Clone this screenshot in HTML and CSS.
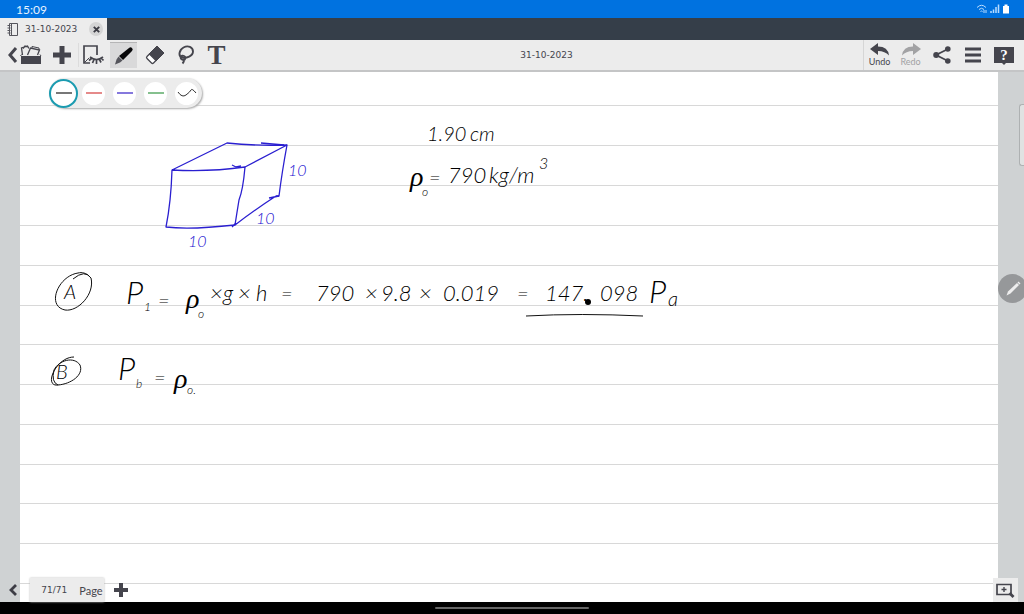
FILE: index.html
```
<!DOCTYPE html>
<html lang="en">

<head>
  <meta charset="UTF-8">
  <meta name="viewport" content="width=device-width, initial-scale=1.0">
  <title>31-10-2023</title>
  <link rel="stylesheet" href="styles.css">
</head>

<body>
  <div class="status-bar">
    <span>15:09</span>
    <svg class="status-icons" width="34" height="12" viewBox="0 0 34 12">
      <path d="M1 4.500Q5.500 0 10 4.500M3 6.500Q5.500 4 8 6.500M4.500 8.500Q5.500 7.500 6.500 8.500M8 10V7M10 7v3" fill="none" stroke="#b9dcff"/>
      <path d="M15 10V8M17.500 10V6.500M20 10V4M22.500 10V1.500" stroke="#b9dcff" stroke-width="1.500"/>
      <path d="M27 3h1.500V1.500h3V3H33v7.500h-6z" fill="#fff"/>
    </svg>
  </div>

  <div class="tabs">
    <div class="tab">
      <svg width="11" height="13" viewBox="0 0 11 13" fill="none" stroke="#55555c">
        <path d="M2.500.5h8v12h-8zM4.500 1v11M.5 2.500h3M.5 5h3M.5 7.500h3M.5 10h3"/>
      </svg>
      <span>31-10-2023</span>
      <button type="button" class="close" aria-label="Close tab">
        <svg width="7" height="7" viewBox="0 0 7 7"><path d="M.8.8l5.400 5.400M6.200.8L.8 6.200" stroke="#3c3c44" stroke-width="1.900"/></svg>
      </button>
    </div>
  </div>

  <header class="toolbar">
    <div class="tools">
      <button type="button" class="back" aria-label="Back to notes">
        <svg width="36" height="22" viewBox="0 0 36 22">
          <path d="M9 4L3 11l6 7" fill="none" stroke="#45454d" stroke-width="3"/>
          <path d="M14 12h20v8H14z" fill="#45454d"/>
          <path d="M15.500 11l-1-7 6-2 1.500 2.500M16 4.500l2-2.500 2.500 1M20.500 11l3-7 9 2-2 5" fill="none" stroke="#45454d" stroke-width="1.300"/>
          <path d="M13.500 12l1-1.500M33 10.500l1 1.500M25 4V2.500l7 1.500v2" fill="none" stroke="#45454d"/>
        </svg>
      </button>
      <button type="button" aria-label="New">
        <svg width="18" height="18" viewBox="0 0 18 18"><path d="M9 0v18M0 9h18" stroke="#45454d" stroke-width="5"/></svg>
      </button>
      <button type="button" class="divided" aria-label="View mode">
        <svg width="22" height="20" viewBox="0 0 22 20" fill="none" stroke="#45454d">
          <path d="M8 18H2V1h13v9" stroke-width="1.700"/>
          <path d="M2 18l5-5" stroke-width="1"/>
          <path d="M8 12q6.500 5 13 0M9.500 13.500L7 15.500M12 14.500l-1.500 3.500M14.500 15v4M17.500 14.500l1.500 3M19.500 13.500l2 2" stroke-width="1.700"/>
        </svg>
      </button>
      <button type="button" class="active" aria-label="Pen">
        <svg width="20" height="20" viewBox="0 0 20 20">
          <path d="M15 2q1.500-1.500 3 0t0 3L9 14l-4-4z" fill="#08080a"/>
          <path d="M4.500 10.500l4 4-2.500 2-5 2 1.500-5z" fill="#55555c"/>
        </svg>
      </button>
      <button type="button" aria-label="Eraser">
        <svg width="20" height="20" viewBox="0 0 20 20">
          <path d="M12 1l7 7-8 8-7-7z" fill="#45454d" stroke="#45454d" stroke-linejoin="round"/>
          <path d="M4.500 9l6.500 6.500-2.500 2.500q-1 1-2 0L2 13.500q-1-1 0-2z" fill="#fff" stroke="#45454d" stroke-width="1.300"/>
        </svg>
      </button>
      <button type="button" aria-label="Lasso">
        <svg width="18" height="20" viewBox="0 0 18 20" fill="none" stroke="#45454d" stroke-width="1.900">
          <path d="M5 12.500C1 11 2 5 6.500 2.500S16 2 16 6.500 9.500 13.500 5 12.500z"/>
          <path d="M4 12q1-2 3-1t1 3-3 .5-1-2.500M6 14q2 2-.5 4.500"/>
        </svg>
      </button>
      <button type="button" class="text-tool" aria-label="Text">T</button>
    </div>

    <h1>31-10-2023</h1>

    <div class="actions">
      <button type="button" class="labelled">
        <svg width="20" height="14" viewBox="0 0 20 14"><path d="M0 6l8-6v3.500q10 0 11 9-4-4.500-11-4.500v4z" fill="#45454d"/></svg>
        Undo
      </button>
      <button type="button" class="labelled" disabled>
        <svg width="20" height="14" viewBox="0 0 20 14"><path d="M20 6l-8-6v3.500q-10 0-11 9 4-4.500 11-4.500v4z" fill="#a2a2a4"/></svg>
        Redo
      </button>
      <button type="button" aria-label="Share">
        <svg width="18" height="18" viewBox="0 0 18 18" fill="#45454d">
          <path d="M15 3L3 9l12 6" fill="none" stroke="#45454d" stroke-width="1.800"/>
          <circle cx="3.200" cy="9" r="3"/><circle cx="14.800" cy="3" r="2.800"/><circle cx="14.800" cy="15" r="2.800"/>
        </svg>
      </button>
      <button type="button" aria-label="Menu">
        <svg width="16" height="16" viewBox="0 0 16 16"><path d="M0 2h16M0 8h16M0 14h16" stroke="#45454d" stroke-width="3"/></svg>
      </button>
      <button type="button" class="help" aria-label="Help">?</button>
    </div>
  </header>

  <main class="workspace">
    <div class="page">
      <svg class="ink" width="100%" height="100%">
        <g class="rules">
          <line x2="100%" y1="33" y2="33"/>
          <line x2="100%" y1="73" y2="73"/>
          <line x2="100%" y1="113" y2="113"/>
          <line x2="100%" y1="153" y2="153"/>
          <line x2="100%" y1="193" y2="193"/>
          <line x2="100%" y1="233" y2="233"/>
          <line x2="100%" y1="272" y2="272"/>
          <line x2="100%" y1="312" y2="312"/>
          <line x2="100%" y1="352" y2="352"/>
          <line x2="100%" y1="392" y2="392"/>
          <line x2="100%" y1="431" y2="431"/>
          <line x2="100%" y1="471" y2="471"/>
          <line x2="100%" y1="511" y2="511"/>
        </g>

        <!-- block with its dimensions -->
        <g class="cube">
          <path d="M152 98Q151 130 146 155Q170 158 215 153Q217 140 219 128Q223 118 225 95Q190 100 152 98L207 71Q235 74 267 73Q262 100 259 124L256 124"/>
          <path d="M241 71l23 2M225 95L267 73M215 153Q236 137 256 124M249 126l10-2M212 93l4 2 5-1M212 155l4-4"/>
        </g>
        <g class="blue">
          <text class="hand-sm" x="268" y="104">10</text>
          <text class="hand-sm" x="236" y="152">10</text>
          <text class="hand-sm" x="168" y="175">10</text>
        </g>

        <text class="hand" x="407" y="69">1.90 <tspan x="450">cm</tspan></text>
        <text class="hand"><tspan class="rho" x="390" y="114">ρ</tspan><tspan class="hand-sub" x="402" y="124">o</tspan><tspan x="409" y="113">=</tspan><tspan class="hand-md" x="428" y="111">790</tspan><tspan class="hand-md" x="469">kg/m</tspan><tspan class="hand-sm" x="519" y="97">3</tspan></text>

        <!-- part A -->
        <path class="stroke" d="M53 207Q65 197 71 206C75 222 58 240 45 238C26 234 38 204 58 201C62 200 66 201 69 204"/>
        <text class="hand" x="44" y="227">A</text>
        <text class="hand"><tspan class="hand-lg" x="106" y="232">P</tspan><tspan class="hand-sub" x="124" y="239">1</tspan><tspan x="138" y="236">=</tspan><tspan class="rho" x="166" y="236">ρ</tspan><tspan class="hand-sub" x="178" y="246">o</tspan><tspan class="hand-md" x="190" y="229">×</tspan><tspan class="hand-md" x="203">g</tspan><tspan class="hand-md" x="218">×</tspan><tspan class="hand-md" x="236">h</tspan><tspan x="261">=</tspan><tspan class="hand-md" x="296">790</tspan><tspan class="hand-md" x="345">×</tspan><tspan class="hand-md" x="361">9.8</tspan><tspan class="hand-md" x="399">×</tspan><tspan class="hand-md" x="423">0.019</tspan><tspan x="497">=</tspan><tspan class="hand-md" x="525">147.</tspan><tspan class="hand-md" x="580">098</tspan><tspan class="hand-lg" x="629" y="231">P</tspan><tspan x="648" y="234">a</tspan></text>
        <circle cx="568" cy="230" r="3"/>
        <path class="stroke" d="M506 244Q560 241 623 244"/>

        <!-- part B -->
        <path class="stroke" d="M54 285C36 285 23 315 38 313C51 312 64 303 60 293C54 284 39 288 34 298Q31 310 38 313"/>
        <text class="hand" x="36" y="307">B</text>
        <text class="hand"><tspan class="hand-lg" x="98" y="308">P</tspan><tspan class="hand-sub" x="116" y="316">b</tspan><tspan x="134" y="313">=</tspan><tspan class="rho" x="154" y="316">ρ</tspan><tspan class="hand-sub" x="167" y="322">o.</tspan></text>
      </svg>
    </div>

    <div class="palette">
      <button type="button" class="selected" aria-label="Black pen"><span class="line black"></span></button>
      <button type="button" aria-label="Red pen"><span class="line red"></span></button>
      <button type="button" aria-label="Blue pen"><span class="line violet"></span></button>
      <button type="button" aria-label="Green pen"><span class="line green"></span></button>
      <button type="button" aria-label="Stroke style">
        <svg width="20" height="10" viewBox="0 0 20 10"><path d="M1 4q4 6 8 3t5-5 5 3" fill="none" stroke="#333"/></svg>
      </button>
    </div>

    <button type="button" class="drawer" aria-label="Open side panel"></button>
    <button type="button" class="float-pen" aria-label="Pen mode">
      <svg width="16" height="16" viewBox="0 0 16 16"><path d="M12 2l2 2-8.500 8.500-4 2 1.500-4z" fill="#eee"/><path d="M13 1l2 2" stroke="#eee" stroke-width="1.500"/></svg>
    </button>

    <div class="page-nav">
      <button type="button" class="previous" aria-label="Previous page">
        <svg width="8" height="12" viewBox="0 0 8 12"><path d="M7 1L2 6l5 5" fill="none" stroke="#3c3c44" stroke-width="2.800"/></svg>
      </button>
      <button type="button" class="counter"><span>71/71</span> Page</button>
      <button type="button" class="add-page" aria-label="Add page">
        <svg width="14" height="14" viewBox="0 0 14 14"><path d="M7 0v14M0 7h14" stroke="#45454d" stroke-width="4"/></svg>
      </button>
    </div>
    <button type="button" class="zoom-box" aria-label="Zoom window">
      <svg width="19" height="15" viewBox="0 0 19 15" fill="none" stroke="#45454d">
        <path d="M1 1.500h14v10H1z" stroke-width="1.700"/>
        <path d="M8 4v5M5.500 6.500h5" stroke-width="1.400"/>
        <path d="M13.500 10l4 4" stroke-width="2.800"/>
      </svg>
    </button>
  </main>

  <div class="system-nav"><span></span></div>
</body>

</html>
```

FILE: styles.css
```
* {
  box-sizing: border-box;
}

body {
  margin: 0;
  height: 100vh;
  display: flex;
  flex-direction: column;
  overflow: hidden;
  background-color: #000;
  color: #45454d;
  font-family: Lato, "Liberation Sans", sans-serif;
}

button {
  display: flex;
  align-items: center;
  justify-content: center;
  padding: 0;
  border: none;
  background: none;
  color: inherit;
  font-family: inherit;
  cursor: pointer;
}

/* status bar and tabs */
.status-bar {
  display: flex;
  align-items: center;
  justify-content: space-between;
  height: 18px;
  padding: 0 14px 0 16px;
  background-color: #0072e0;
  color: #e6f3ff;
  font-size: 12px;
}

.tabs {
  display: flex;
  height: 22px;
  background-color: #353e49;
}

.tab {
  display: flex;
  align-items: center;
  gap: 7px;
  width: 107px;
  padding: 0 4px 0 7px;
  background-color: #ececec;
  font-family: "DejaVu Sans", sans-serif;
  font-size: 9px;
}

.close {
  width: 14px;
  height: 14px;
  margin-left: auto;
  border-radius: 50%;
  background-color: #d5d5d5;
}

/* toolbar */
.toolbar {
  display: flex;
  align-items: center;
  height: 32px;
  padding: 0 6px;
  background-color: #ececec;
  border-bottom: 2px solid #c4c5c6;
}

.tools,
.actions {
  display: flex;
  gap: 4px;
  height: 100%;
  align-items: center;
}

.toolbar button {
  width: 27px;
  height: 26px;
}

.toolbar .back {
  width: 38px;
}

.divided {
  box-shadow: -2px 0 0 -1px #dcdcdc;
}

.toolbar .active {
  background-color: #d9d9da;
  border-top: 1px solid #b5b5b6;
}

.toolbar .text-tool {
  font-family: "Liberation Serif", serif;
  font-size: 27px;
  font-weight: bold;
}

.toolbar h1 {
  flex: 1;
  margin: 0;
  text-align: center;
  font-family: "DejaVu Sans", sans-serif;
  font-size: 9px;
  font-weight: normal;
}

.actions {
  padding-left: 2px;
  border-left: 1px solid #d6d6d6;
}

.toolbar .labelled {
  flex-direction: column;
  font-size: 9px;
  line-height: 10px;
}

.toolbar .labelled:disabled {
  color: #a2a2a4;
}

.toolbar .help {
  position: relative;
  width: 20px;
  height: 16px;
  margin: 0 4px;
  background-color: #45454d;
  color: #fff;
  font-family: "Liberation Serif", serif;
  font-size: 15px;
  font-weight: bold;
}

.help::after {
  content: "";
  position: absolute;
  top: 100%;
  left: 8px;
  border: 2px solid transparent;
  border-top-color: #45454d;
}

/* note page */
.workspace {
  position: relative;
  flex: 1;
  min-height: 0;
  padding: 0 26px 0 20px;
  background-color: #cfd2d3;
}

.page {
  height: 100%;
  background-color: #fff;
}

.ink {
  display: block;
  fill: #000;
}

.rules {
  stroke: #d8d8d8;
  shape-rendering: crispEdges;
}

.hand,
.hand-sm {
  font-style: italic;
  font-weight: 300;
}

.hand {
  font-size: 20px;
}

.hand-md {
  font-size: 22px;
}

.hand-sm {
  font-size: 16px;
}

.hand-lg {
  font-size: 32px;
}

.hand-sub {
  font-size: 12px;
}

.rho {
  font-family: "Liberation Serif", serif;
  font-size: 28px;
}

.stroke {
  fill: none;
  stroke: #111;
}

.blue {
  fill: #1a10d0;
}

.cube {
  fill: none;
  stroke: #2a1fd0;
  stroke-width: 1.3;
  stroke-linejoin: round;
}

/* pen palette */
.palette {
  position: absolute;
  top: 6px;
  left: 49px;
  display: flex;
  gap: 4px;
  align-items: center;
  height: 30px;
  padding-right: 2px;
  border-radius: 15px;
  background-color: #ececec;
  box-shadow: 1px 1px 2px #aaa;
}

.palette button {
  width: 27px;
  height: 27px;
  border: 2px solid #ececec;
  border-radius: 50%;
  background-color: #fff;
}

.palette .selected {
  width: 29px;
  height: 29px;
  margin-right: -2px;
  border-color: #1b9bb0;
}

.line {
  width: 16px;
  height: 2px;
}

.black {
  background-color: #777;
}

.red {
  background-color: #e58a8a;
}

.violet {
  background-color: #8578dd;
}

.green {
  background-color: #85c08e;
}

/* controls on the page edges */
.drawer {
  position: absolute;
  top: 32px;
  right: 0;
  width: 5px;
  height: 62px;
  border: 1px solid #aeb1b2;
  border-right: none;
  border-radius: 3px 0 0 3px;
  background-color: #e0e2e2;
}

.float-pen {
  position: absolute;
  top: 202px;
  right: -3px;
  width: 29px;
  height: 29px;
  border-radius: 50%;
  background-color: #96989a;
}

.page-nav {
  position: absolute;
  bottom: 0;
  left: 0;
  display: flex;
  align-items: center;
  height: 24px;
}

.previous {
  width: 30px;
  padding-right: 4px;
}

.counter {
  gap: 12px;
  width: 74px;
  height: 24px;
  padding-left: 10px;
  background-color: #ececec;
  box-shadow: 0 0 2px #bbb;
  font-size: 11px;
}

.counter span {
  font-family: "DejaVu Sans", sans-serif;
  font-size: 9px;
}

.add-page {
  width: 34px;
}

.zoom-box {
  position: absolute;
  right: 6px;
  bottom: 0;
  width: 25px;
  height: 24px;
  background-color: #ececec;
}

/* system gesture bar */
.system-nav {
  display: flex;
  align-items: center;
  justify-content: center;
  height: 12px;
  background-color: #000;
}

.system-nav span {
  width: 15%;
  height: 2px;
  border-radius: 1px;
  background-color: #666;
}
```
